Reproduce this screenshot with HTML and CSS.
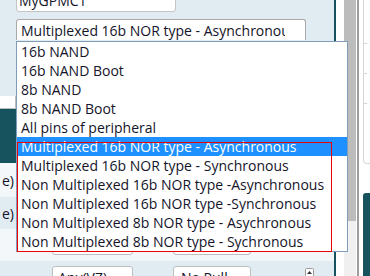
FILE: index.html
```html
<!DOCTYPE html>
<html>
<head>
<meta charset="utf-8">
<link rel="stylesheet" href="styles.css">
</head>
<body>
<div class="screen">
  <div class="main">
    <div class="top">
      <div class="name-input">MyGPMC1</div>
      <div class="select"><span class="select-text">Multiplexed 16b NOR type - Asynchronous</span></div>
    </div>
    <div class="edge-row"><div class="edge-box"></div></div>
    <div class="band"></div>
    <div class="row light first"><div class="lbl"><span>e)</span></div></div>
    <div class="row blue"><div class="lbl"><span>e)</span></div></div>
    <div class="row light">
      <div class="fields">
        <div class="field f1"></div>
        <div class="field f2"></div>
      </div>
    </div>
    <div class="row blue">
      <div class="fields">
        <div class="field f1">Any(VZ)</div>
        <div class="field f2">No Pull</div>
        <div class="spin"><svg width="9" height="9" viewBox="0 0 9 9"><rect x="0.5" y="0.5" width="8" height="8" rx="1" fill="#fff" stroke="#999"/><path d="M2 6 L4.5 3 L7 6 Z" fill="#333"/></svg></div>
      </div>
    </div>
  </div>
  <div class="gap"></div>
  <div class="scroll"><div class="thumb"></div></div>
  <div class="sep"><div class="sep-line"></div></div>
  <div class="side">
    <div class="side-box">
      <div class="tick"></div>
      <div class="tick"></div>
      <div class="tick"></div>
    </div>
    <div class="side-teal"></div>
  </div>

  <ul class="dropdown">
    <li>16b NAND</li>
    <li>16b NAND Boot</li>
    <li>8b NAND</li>
    <li>8b NAND Boot</li>
    <li>All pins of peripheral</li>
    <li class="sel">Multiplexed 16b NOR type - Asynchronous</li>
    <li>Multiplexed 16b NOR type - Synchronous</li>
    <li>Non Multiplexed 16b NOR type -Asynchronous</li>
    <li>Non Multiplexed 16b NOR type -Synchronous</li>
    <li>Non Multiplexed 8b NOR type - Asychronous</li>
    <li>Non Multiplexed 8b NOR type - Sychronous</li>
  </ul>
  <div class="annot"></div>
</div>
</body>
</html>
```

FILE: styles.css
```css
html, body {
  margin: 0;
  padding: 0;
}
body {
  width: 370px;
  height: 276px;
  overflow: hidden;
  font-family: "Open Sans", "Noto Sans", sans-serif;
  font-size: 14px;
  color: #14142a;
}
.screen {
  position: relative;
  display: flex;
  width: 370px;
  height: 276px;
  overflow: hidden;
  background: #ffffff;
}
.main {
  width: 334px;
  flex: none;
  border-right: 2px solid #17525f;
  background: #e0ecf2;
  display: flex;
  flex-direction: column;
}
.top {
  height: 96px;
  flex: none;
  display: flex;
  flex-direction: column;
  padding-left: 16px;
}
.name-input {
  margin-top: -10px;
  width: 156px;
  height: 20px;
  line-height: 20px;
  padding-left: 2px;
  background: #fff;
  border: 1px solid #c4c4c4;
  border-radius: 3px;
  box-sizing: content-box;
}
.select {
  margin-top: 7px;
  width: 290px;
  height: 21px;
  background: #fff;
  border: 1px solid #a9a9a9;
  border-bottom: none;
  border-radius: 3px 3px 0 0;
  padding-left: 4px;
  box-sizing: border-box;
  line-height: 21px;
}
.select-text {
  display: block;
  width: 264px;
  overflow: hidden;
  white-space: nowrap;
}
.edge-row {
  height: 13px;
  flex: none;
}
.edge-box {
  width: 15px;
  height: 12px;
  background: #fff;
  border-right: 1px solid #bdbdbd;
  border-bottom: 1px solid #bdbdbd;
  box-sizing: content-box;
}
.band {
  height: 54px;
  flex: none;
  background: #17525f;
}
.row {
  height: 32px;
  flex: none;
  display: flex;
  align-items: center;
}
.row.first {
  height: 34px;
}
.row.light {
  background: #f3f7f9;
}
.row.blue {
  background: #e0ecf2;
}
.lbl {
  width: 14px;
  overflow: hidden;
  display: flex;
  justify-content: flex-end;
  white-space: nowrap;
}
.fields {
  display: flex;
  align-items: flex-start;
  padding-left: 52px;
  height: 32px;
}
.row.light .fields {
  padding-top: 4px;
  box-sizing: border-box;
}
.row.blue .fields {
  padding-top: 5px;
  box-sizing: border-box;
}
.field {
  height: 22px;
  line-height: 22px;
  background: #fff;
  border: 1px solid #bdbdbd;
  border-radius: 3px;
  padding-left: 5px;
  box-sizing: border-box;
  white-space: nowrap;
  overflow: hidden;
}
.f1 {
  width: 81px;
}
.f2 {
  width: 78px;
  margin-left: 40px;
  padding-left: 7px;
}
.spin {
  margin-left: 54px;
  margin-top: 2px;
  height: 9px;
}
.spin svg {
  display: block;
}
.gap {
  width: 8px;
  flex: none;
  background: #fff;
}
.scroll {
  width: 12px;
  flex: none;
  background: #f0f0f0;
}
.thumb {
  height: 221px;
  background: #bcbcbc;
}
.sep {
  width: 4px;
  flex: none;
  background: #fff;
  padding-left: 1px;
  box-sizing: border-box;
}
.sep-line {
  width: 2px;
  height: 100%;
  background: #9c9c9c;
}
.side {
  width: 10px;
  flex: none;
  padding-left: 3px;
  box-sizing: border-box;
  background: #fff;
  display: flex;
  flex-direction: column;
}
.side-box {
  height: 164px;
  border-left: 1px solid #d6d6d6;
  border-bottom: 1px solid #d6d6d6;
  border-radius: 0 0 0 4px;
  box-sizing: border-box;
  padding-top: 43px;
  display: flex;
  flex-direction: column;
  gap: 29px;
}
.tick {
  width: 3px;
  height: 1px;
  background: #d6d6d6;
}
.side-teal {
  margin-top: 29px;
  flex: 1;
  background: #17525f;
  border-radius: 3px 0 0 0;
}
.dropdown {
  position: absolute;
  left: 16px;
  top: 41px;
  width: 332px;
  margin: 0;
  padding: 0;
  list-style: none;
  background: #fff;
  border: 1px solid #7f9db9;
  box-sizing: border-box;
}
.dropdown li {
  height: 19px;
  line-height: 19px;
  padding-left: 4px;
  white-space: nowrap;
}
.dropdown li.sel {
  background: #1e90ff;
  color: #fff;
}
.annot {
  position: absolute;
  left: 17px;
  top: 142px;
  width: 315px;
  height: 110px;
  border: 1px solid #f00000;
  box-sizing: border-box;
}
```
